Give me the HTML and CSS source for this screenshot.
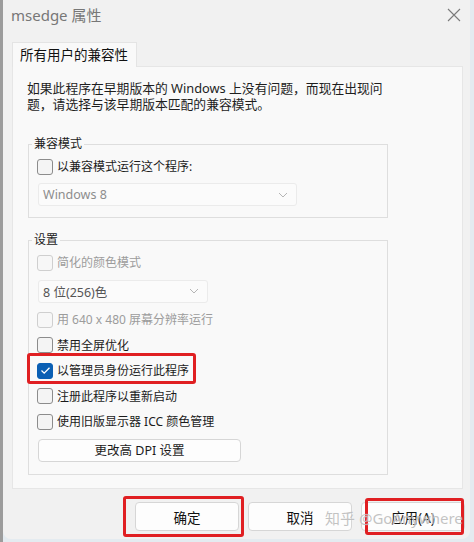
FILE: index.html
```html
<!DOCTYPE html>
<html lang="zh-CN">
<head>
<meta charset="utf-8">
<title>msedge 属性</title>
<link rel="stylesheet" href="styles.css">
</head>
<body>
<div class="window">
  <div class="titlebar">
    <span class="title">msedge 属性</span>
    <svg class="close" width="14" height="14" viewBox="0 0 14 14"><path d="M1 1 L13 13 M13 1 L1 13" stroke="#7a7a7a" stroke-width="1.1" fill="none"/></svg>
  </div>
  <div class="tabs">
    <div class="tab">所有用户的兼容性</div>
  </div>
  <div class="panel">
    <p class="desc">如果此程序在早期版本的 Windows 上没有问题，而现在出现问<br>题，请选择与该早期版本匹配的兼容模式。</p>
    <fieldset class="group g1">
      <legend>兼容模式</legend>
      <div class="rows">
        <label class="row"><span class="box"></span><span>以兼容模式运行这个程序:</span></label>
        <div class="select wide disabled"><span>Windows 8</span><svg width="10" height="6" viewBox="0 0 10 6"><path d="M1 1 L5 5 L9 1" stroke="#b5b5b5" stroke-width="1" fill="none"/></svg></div>
      </div>
    </fieldset>
    <fieldset class="group g2">
      <legend>设置</legend>
      <div class="rows">
        <label class="row disabled"><span class="box"></span><span>简化的颜色模式</span></label>
        <div class="select narrow"><span>8 位(256)色</span><svg width="10" height="6" viewBox="0 0 10 6"><path d="M1 1 L5 5 L9 1" stroke="#b5b5b5" stroke-width="1" fill="none"/></svg></div>
        <label class="row disabled"><span class="box"></span><span>用 640 x 480 屏幕分辨率运行</span></label>
        <label class="row"><span class="box"></span><span>禁用全屏优化</span></label>
        <label class="row admin"><span class="box checked"><svg width="11" height="9" viewBox="0 0 11 9"><path d="M1.5 4.5 L4.2 7.2 L9.5 1.8" stroke="#fff" stroke-width="1.3" fill="none"/></svg></span><span>以管理员身份运行此程序</span><span class="redbox rb-admin"></span></label>
        <label class="row"><span class="box"></span><span>注册此程序以重新启动</span></label>
        <label class="row"><span class="box"></span><span>使用旧版显示器 ICC 颜色管理</span></label>
        <button class="btn dpi">更改高 DPI 设置</button>
      </div>
    </fieldset>
  </div>
  <div class="footer">
    <button class="btn act">确定<span class="redbox rb-ok"></span></button>
    <button class="btn act">取消</button>
    <button class="btn act">应用(A)<span class="redbox rb-apply"></span></button>
  </div>
  <div class="watermark">知乎 @GoAnywhere</div>
</div>
</body>
</html>
```

FILE: styles.css
```css
* { box-sizing: border-box; }
html, body { margin: 0; padding: 0; }
body {
  width: 474px;
  height: 542px;
  overflow: hidden;
  background: linear-gradient(to right, #9c9c9c 0 3px, #e4ebf0 3px);
  font-family: "Noto Sans", "Noto Sans CJK SC", sans-serif;
  font-size: 12px;
  color: #1b1b1b;
}
.window {
  position: relative;
  margin-left: 3px;
  width: 467px;
  height: 539px;
  background: #f1f1f1;
  border-radius: 0 0 8px 8px;
  display: flex;
  flex-direction: column;
}
.titlebar {
  height: 30px;
  display: flex;
  align-items: center;
  justify-content: space-between;
  padding: 0 9px 0 8px;
}
.title {
  font-size: 15px;
  color: #777;
  line-height: 20px;
}
.close { display: block; }
.tabs {
  padding: 12px 0 0 9px;
  display: flex;
}
.tab {
  height: 25px;
  width: 125px;
  background: #f9f9f9;
  border: 1px solid #e4e4e4;
  border-bottom: none;
  font-size: 13.5px;
  line-height: 24px;
  padding-left: 7px;
  color: #111;
  position: relative;
  z-index: 1;
  margin-bottom: -1px;
}
.panel {
  margin-left: 9px;
  width: 451px;
  height: 423px;
  background: #f9f9f9;
  border: 1px solid #e6e6e6;
  padding-top: 14px;
}
.desc {
  margin: 0 0 0 14px;
  line-height: 15.5px;
  font-size: 12.8px;
  color: #1e1e1e;
}
.group {
  margin: 0 0 0 15px;
  width: 360px;
  border: 1px solid #dedede;
  padding: 0 8px 11px 8px;
  min-width: 0;
}
.group legend {
  margin-left: -5px;
  padding: 0 2px;
  line-height: 16px;
  font-size: 12px;
  color: #1b1b1b;
}
.g1 { margin-top: 24px; }
.g2 { margin-top: 14px; padding-bottom: 12px; }
.rows {
  display: flex;
  flex-direction: column;
  align-items: flex-start;
  padding-top: 6px;
}
.g1 .rows { gap: 8px; }
.g2 .rows { gap: 8.5px; }
.row {
  position: relative;
  height: 17px;
  display: flex;
  align-items: center;
  gap: 4px;
  font-size: 12px;
  color: #1b1b1b;
  line-height: 17px;
}
.box {
  width: 16px;
  height: 16px;
  border: 1px solid #8c8c8c;
  border-radius: 3px;
  background: #f4f4f4;
  display: flex;
  align-items: center;
  justify-content: center;
  flex: none;
}
.box.checked {
  background: #0a5fb4;
  border-color: #0a5fb4;
}
.row.disabled { color: #9c9c9c; }
.row.disabled .box { border-color: #cfcfcf; background: #f7f7f7; }
.select {
  height: 23px;
  border: 1px solid #ebebeb;
  border-radius: 3px;
  background: #fbfbfb;
  display: flex;
  align-items: center;
  justify-content: space-between;
  padding: 0 8px 0 4px;
  font-size: 12.5px;
  margin-left: 1px;
}
.select.wide { width: 259px; color: #8d8d8d; }
.select.narrow { width: 170px; color: #555; }
.redbox {
  position: absolute;
  border: 3px solid #e01f22;
  border-radius: 3px;
  pointer-events: none;
}
.rb-admin { left: -10px; top: -9px; width: 169px; height: 31px; }
.btn {
  font-family: "Noto Sans", "Noto Sans CJK SC", sans-serif;
  background: #fdfdfd;
  border: 1px solid #d6d6d6;
  border-radius: 4px;
  color: #1b1b1b;
  font-size: 12.5px;
  padding: 0;
  position: relative;
}
.dpi {
  width: 203px;
  height: 23px;
  margin-left: 1px;
  line-height: 21px;
}
.footer {
  display: flex;
  justify-content: flex-end;
  gap: 9px;
  padding: 13px 5px 0 0;
}
.act {
  width: 104px;
  height: 29px;
  font-size: 13.5px;
  color: #111;
}
.rb-ok { left: -13px; top: -7px; width: 121px; height: 41px; }
.rb-apply { left: 3px; top: -5px; width: 99px; height: 37px; }
.watermark {
  position: absolute;
  left: 322px;
  top: 508px;
  font-size: 15px;
  line-height: 20px;
  color: rgba(175, 175, 175, 0.75);
  text-shadow: 0 0 1px rgba(255,255,255,0.8);
  white-space: nowrap;
  pointer-events: none;
}
```
